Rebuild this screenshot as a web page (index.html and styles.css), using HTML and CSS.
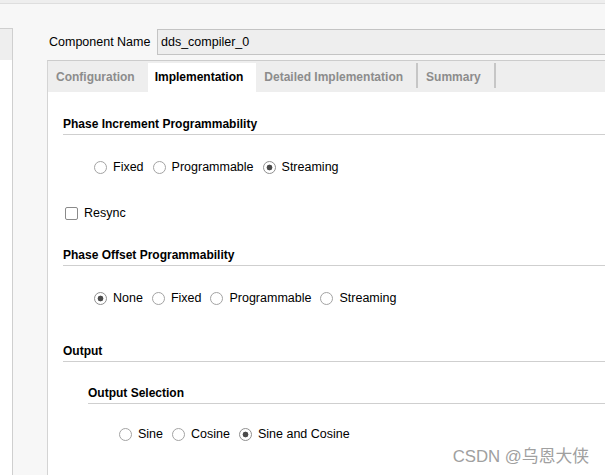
FILE: index.html
```html
<!DOCTYPE html>
<html lang="en">
<head>
    <meta charset="UTF-8">
    <meta name="viewport" content="width=device-width, initial-scale=1.0">
    <title>DDS Compiler</title>
    <link rel="stylesheet" href="styles.css">
</head>
<body>
    <div class="topbar"></div>
    <div class="window">
        <aside class="side">
            <div class="side-head"></div>
            <div class="side-body"></div>
        </aside>

        <main class="main">
            <div class="name-row">
                <span class="name-label">Component Name</span>
                <div class="name-input">dds_compiler_0</div>
            </div>

            <div class="tabs">
                <div class="tab-bar">
                    <div class="tab">Configuration</div>
                    <div class="tab active">Implementation</div>
                    <div class="tab">Detailed Implementation</div>
                    <div class="tab-sep"></div>
                    <div class="tab">Summary</div>
                    <div class="tab-sep"></div>
                </div>

                <div class="tab-body">
                    <h2 class="group-title">Phase Increment Programmability</h2>
                    <div class="options">
                        <label class="opt"><span class="radio"></span>Fixed</label>
                        <label class="opt"><span class="radio"></span>Programmable</label>
                        <label class="opt"><span class="radio checked"></span>Streaming</label>
                    </div>
                    <div class="check-row">
                        <label class="opt"><span class="checkbox"></span>Resync</label>
                    </div>

                    <h2 class="group-title second">Phase Offset Programmability</h2>
                    <div class="options">
                        <label class="opt"><span class="radio checked"></span>None</label>
                        <label class="opt"><span class="radio"></span>Fixed</label>
                        <label class="opt"><span class="radio"></span>Programmable</label>
                        <label class="opt"><span class="radio"></span>Streaming</label>
                    </div>

                    <h2 class="group-title output">Output</h2>
                    <div class="sub-group">
                        <h3 class="group-title sub">Output Selection</h3>
                        <div class="options last">
                            <label class="opt"><span class="radio"></span>Sine</label>
                            <label class="opt"><span class="radio"></span>Cosine</label>
                            <label class="opt"><span class="radio checked"></span>Sine and Cosine</label>
                        </div>
                    </div>
                </div>
            </div>
        </main>
    </div>
    <div class="watermark">CSDN @乌恩大侠</div>
</body>
</html>
```

FILE: styles.css
```css
html, body {
    height: 100%;
}
body {
    margin: 0;
    font-family: "Liberation Sans", Arial, sans-serif;
    font-size: 12px;
    color: #000;
    background-color: #f7f7f7;
    overflow: hidden;
    position: relative;
}
.topbar {
    height: 3px;
    background-color: #eeeeee;
    border-bottom: 1px solid #dedede;
}
.window {
    display: flex;
    height: calc(100% - 4px);
    overflow: hidden;
}

/* panel de la izquierda */
.side {
    width: 12px;
    margin-top: 24px;
    border-top: 1px solid #cfcfcf;
    border-right: 1px solid #cfcfcf;
    display: flex;
    flex-direction: column;
}
.side-head {
    height: 31px;
    background-color: #eeeeee;
}
.side-body {
    flex: 1;
    background-color: #fff;
}

.main {
    flex: 1;
    padding-left: 34px;
    margin-right: -30px;
}
.name-row {
    display: flex;
    align-items: center;
    margin-top: 25px;
}
.name-label {
    width: 110px;
    padding-left: 2px;
    box-sizing: border-box;
    font-size: 12.5px;
}
.name-input {
    flex: 1;
    height: 24px;
    line-height: 24px;
    padding-left: 3px;
    font-size: 12.5px;
    background-color: #eeeeee;
    border: 1px solid #c4c4c4;
}

/* pestañas */
.tabs {
    margin-top: 5px;
    border-top: 1px solid #cccccc;
    border-left: 1px solid #d4d4d4;
}
.tab-bar {
    display: flex;
    height: 31px;
    background-color: #eeeeee;
}
.tab {
    display: flex;
    align-items: center;
    padding: 0 13px 0 8px;
    font-weight: bold;
    color: #8c8c8c;
}
.tab.active {
    margin-top: 2px;
    padding: 0 13px 2px 7px;
    background-color: #fff;
    color: #000;
}
.tab-sep {
    width: 2px;
    margin: 2px 0 4px;
    background-color: #c6c6c6;
}
.tab-body {
    background-color: #fff;
    padding: 24px 0 60px 15px;
}

.group-title {
    margin: 0;
    font-size: 12px;
    font-weight: bold;
    line-height: 16px;
    padding-bottom: 2px;
    border-bottom: 1px solid #cfcfcf;
}
.group-title.second {
    margin-top: 26px;
}
.group-title.output {
    margin-top: 37px;
}
.sub-group {
    padding-left: 25px;
}
.group-title.sub {
    margin-top: 23px;
}

.options {
    display: flex;
    align-items: center;
    height: 16px;
    margin-top: 24px;
    padding-left: 31px;
}
.options.last {
    margin-top: 22px;
}
.opt {
    display: flex;
    align-items: center;
    margin-right: 9px;
    font-size: 12.5px;
    line-height: 16px;
}
.radio {
    width: 13px;
    height: 13px;
    box-sizing: border-box;
    margin-right: 6px;
    border: 1px solid #a3a3a3;
    border-radius: 50%;
    background-color: #fff;
}
.radio.checked {
    border-color: #8f8f8f;
    background: radial-gradient(circle, #4a4a4a 0 2.6px, #fff 3.2px);
}
.check-row {
    display: flex;
    height: 16px;
    margin-top: 30px;
    padding-left: 2px;
}
.checkbox {
    width: 13px;
    height: 13px;
    box-sizing: border-box;
    margin-right: 6px;
    border: 1px solid #8a8a8a;
    border-radius: 2px;
    background-color: #fff;
}

.watermark {
    position: absolute;
    right: 16px;
    top: 447px;
    font-family: "Liberation Sans", "Noto Sans CJK SC", sans-serif;
    font-size: 16.8px;
    line-height: 20px;
    color: #a0a0a0;
}
```
